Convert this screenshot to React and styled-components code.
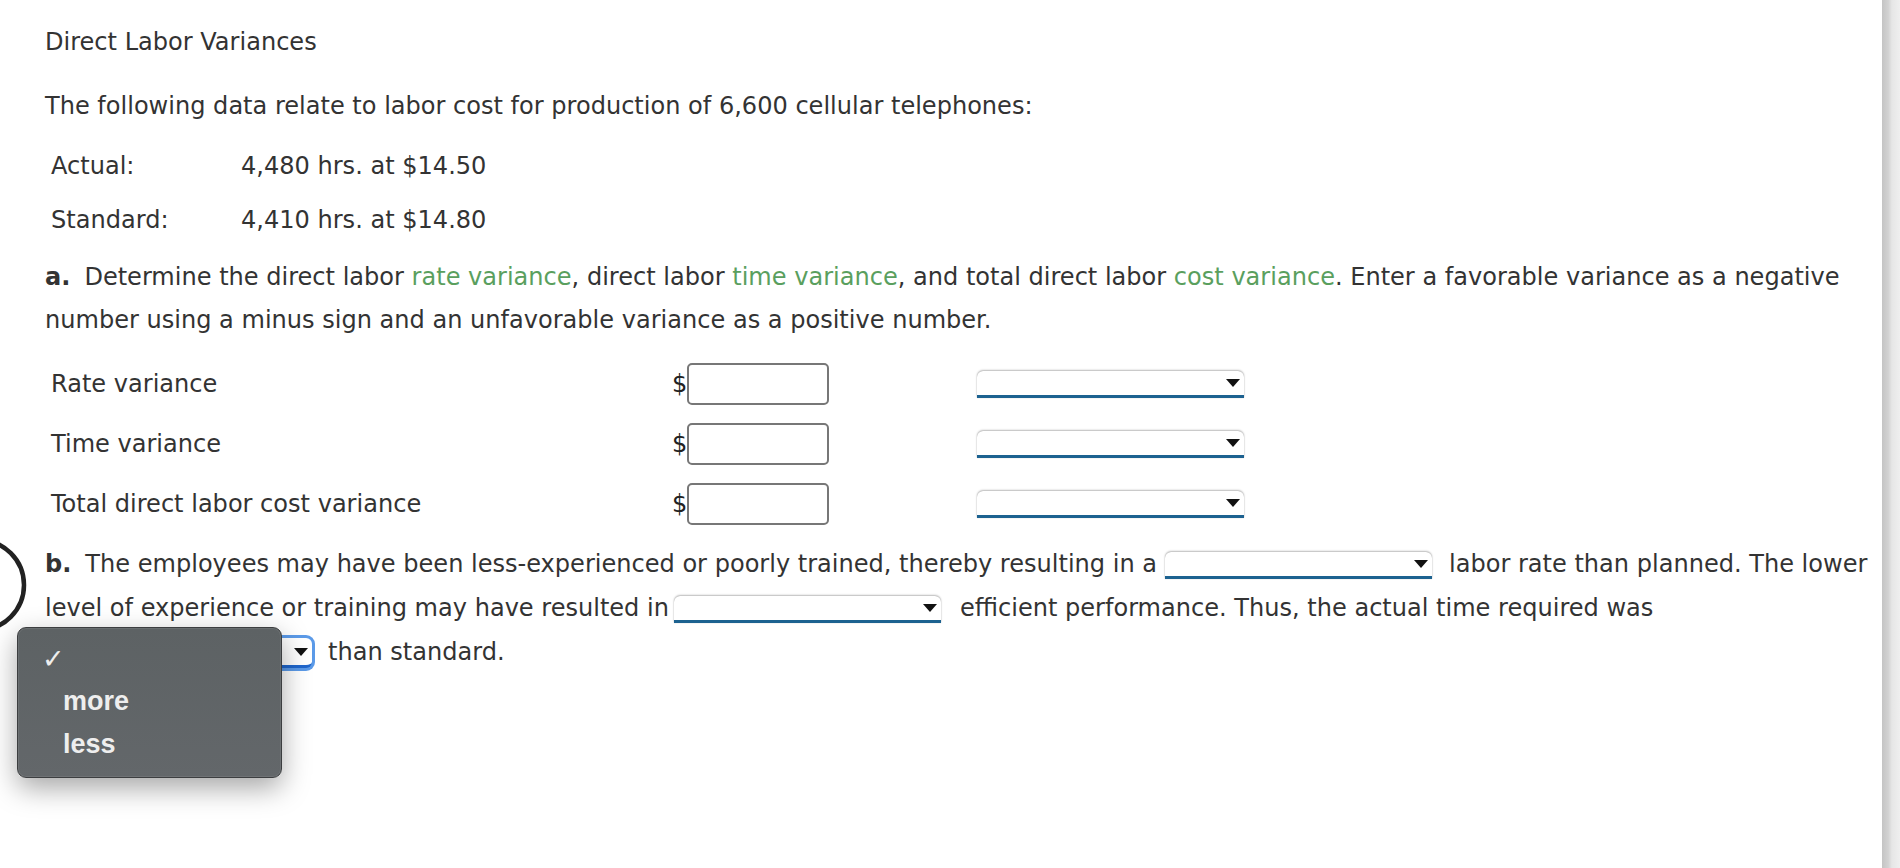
import React from 'react';
import styled, { createGlobalStyle } from 'styled-components';

const GlobalStyle = createGlobalStyle`
  html, body {
    margin: 0;
    padding: 0;
    background: #ffffff;
  }
  body {
    font-family: "DejaVu Sans", Verdana, sans-serif;
    color: #333333;
  }
`;

const Page = styled.div`
  display: flex;
  height: 868px;
  overflow: hidden;
  position: relative;
`;

const Main = styled.div`
  flex: 1;
  min-width: 0;
  padding: 1px 4px 0 45px;
  font-size: 24.05px;
`;

const Scrollbar = styled.div`
  width: 18px;
  flex-shrink: 0;
  background: linear-gradient(to right, #c4c4c4 0%, #d2d2d2 35%, #e6e6e6 55%, #efefef 100%);
`;

const Title = styled.div`
  margin-top: 29px;
  line-height: 24px;
`;

const Para = styled.div`
  margin-top: ${(p) => p.$mt || 0}px;
  line-height: ${(p) => p.$lh || 24}px;
`;

const Line = styled.div`
  white-space: nowrap;
`;

const DataTable = styled.div`
  margin-top: 21px;
  display: grid;
  grid-template-columns: 190px auto;
  grid-auto-rows: 54px;
  align-items: center;
  padding-left: 6px;
`;

const Bold = styled.b`
  font-weight: 700;
  color: #333;
  margin-right: 14px;
`;

const Term = styled.span`
  color: #5a9f5e;
`;

const AnswerGrid = styled.div`
  margin-top: 12px;
  display: grid;
  grid-template-columns: 621px 157px 148px auto;
  grid-auto-rows: 60px;
  align-items: center;
  padding-left: 6px;
`;

const Money = styled.div`
  display: flex;
  align-items: center;
`;

const Dollar = styled.span`
  width: 15px;
  text-align: right;
  font-size: 24px;
  color: #222;
`;

const Input = styled.div`
  width: 139px;
  height: 38px;
  border: 2px solid #777777;
  border-radius: 5px;
  background: #fff;
`;

const Select = styled.span`
  display: inline-flex;
  align-items: center;
  justify-content: flex-end;
  box-sizing: border-box;
  width: ${(p) => p.$w || 267}px;
  height: 27px;
  padding-right: 4px;
  background: #fff;
  border-radius: 6px 6px 0 0;
  box-shadow: 0 -1px 2px rgba(0, 0, 0, 0.25), 0 0 1px rgba(0, 0, 0, 0.3);
  border-bottom: 3px solid #1d6290;
  vertical-align: middle;
  margin: 0 ${(p) => p.$mx || 0}px 0 ${(p) => p.$ml || 0}px;
`;

const FocusSelect = styled(Select)`
  height: 30px;
  border-radius: 6px;
  box-shadow: 0 0 0 3px #5b9ae8;
  border-bottom: 3px solid #1f66cc;
`;

const Arrow = styled.span`
  width: 0;
  height: 0;
  border-left: 7px solid transparent;
  border-right: 7px solid transparent;
  border-top: 8px solid #111;
`;

const Menu = styled.div`
  position: absolute;
  left: 17px;
  top: 627px;
  width: 265px;
  height: 151px;
  box-sizing: border-box;
  padding-top: 9px;
  background: linear-gradient(#5d6264, #63676a);
  border: 1px solid #3c3e40;
  border-radius: 9px;
  box-shadow: 0 10px 28px rgba(0, 0, 0, 0.35), 0 0 0 1px rgba(255, 255, 255, 0.08) inset;
  font-family: "Liberation Sans", Arial, sans-serif;
  font-weight: 700;
  font-size: 27px;
  color: #eeeeee;
`;

const MenuItem = styled.div`
  height: 43px;
  display: flex;
  align-items: center;
  padding-left: ${(p) => (p.$check ? 24 : 45)}px;
`;

const Check = styled.span`
  font-family: "DejaVu Sans", sans-serif;
  font-weight: 700;
  font-size: 27px;
`;

const Circle = styled.svg`
  position: absolute;
  left: 0;
  top: 530px;
`;

export default function App() {
  return (
    <Page>
      <GlobalStyle />
      <Main>
        <Title>Direct Labor Variances</Title>
        <Para $mt={40}>
          The following data relate to labor cost for production of 6,600 cellular telephones:
        </Para>
        <DataTable>
          <span>Actual:</span>
          <span>4,480 hrs. at $14.50</span>
          <span>Standard:</span>
          <span>4,410 hrs. at $14.80</span>
        </DataTable>
        <Para $mt={9} $lh={43}>
          <Line>
            <Bold>a.</Bold>Determine the direct labor <Term>rate variance</Term>, direct labor{' '}
            <Term>time variance</Term>, and total direct labor <Term>cost variance</Term>. Enter a
            favorable variance as a negative
          </Line>
          <Line>number using a minus sign and an unfavorable variance as a positive number.</Line>
        </Para>
        <AnswerGrid>
          {['Rate variance', 'Time variance', 'Total direct labor cost variance'].map((label) => (
            <React.Fragment key={label}>
              <span>{label}</span>
              <Money>
                <Dollar>$</Dollar>
                <Input />
              </Money>
              <span />
              <span>
                <Select>
                  <Arrow />
                </Select>
              </span>
            </React.Fragment>
          ))}
        </AnswerGrid>
        <Para $mt={8} $lh={44}>
          <Line>
            <Bold>b.</Bold>The employees may have been less-experienced or poorly trained, thereby
            resulting in a
            <Select $ml={8} $mx={17}>
              <Arrow />
            </Select>
            labor rate than planned. The lower
          </Line>
          <Line>
            level of experience or training may have resulted in
            <Select $ml={5} $mx={19}>
              <Arrow />
            </Select>
            efficient performance. Thus, the actual time required was
          </Line>
          <Line>
            <FocusSelect $mx={16}>
              <Arrow />
            </FocusSelect>
            than standard.
          </Line>
        </Para>
      </Main>
      <Scrollbar />
      <Circle width="80" height="110" viewBox="0 530 80 110">
        <circle cx="-21" cy="585" r="45" fill="none" stroke="#222" strokeWidth="4.5" />
      </Circle>
      <Menu>
        <MenuItem $check>
          <Check>✓</Check>
        </MenuItem>
        <MenuItem>more</MenuItem>
        <MenuItem>less</MenuItem>
      </Menu>
    </Page>
  );
}
